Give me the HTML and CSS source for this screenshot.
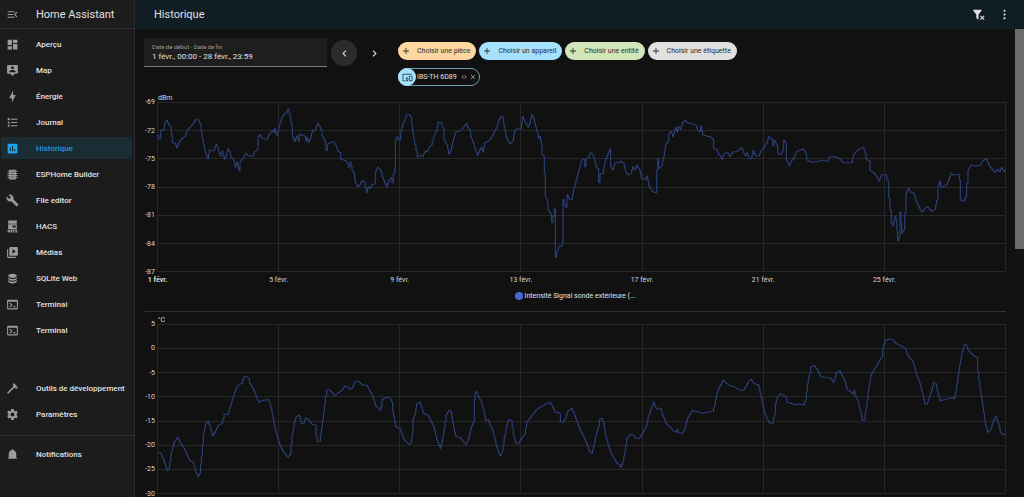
FILE: index.html
```
<!DOCTYPE html>
<html lang="fr">
<head>
  <meta charset="UTF-8">
  <meta name="viewport" content="width=device-width, initial-scale=1.0">
  <title>Historique – Home Assistant</title>
  <link rel="stylesheet" href="styles.css">
</head>
<body>
  <aside class="sidebar">
    <div class="brand">
      <button class="icon-btn" type="button" aria-label="Menu"><svg class="icon" viewBox="0 0 24 24"><path d="M21,15.61L19.59,17L14.58,12L19.59,7L21,8.39L17.44,12L21,15.61M3,6H16V8H3V6M3,13V11H13V13H3M3,18V16H16V18H3Z"/></svg></button>
      <span class="brand-name">Home Assistant</span>
    </div>
    <nav class="nav">
      <a class="item" href="#"><svg class="icon" viewBox="0 0 24 24"><path d="M13,3V9H21V3M13,21H21V11H13M3,21H11V15H3M3,13H11V3H3V13Z"/></svg>Aperçu</a>
      <a class="item" href="#"><svg class="icon" viewBox="0 0 24 24"><path d="M20,2H4A2,2 0 0,0 2,4V16A2,2 0 0,0 4,18H8L12,22L16,18H20A2,2 0 0,0 22,16V4A2,2 0 0,0 20,2M12,4.3C13.5,4.3 14.7,5.5 14.7,7C14.7,8.5 13.5,9.7 12,9.7C10.5,9.7 9.3,8.5 9.3,7C9.3,5.5 10.5,4.3 12,4.3M18,15H6V14.1C6,12.1 10,11 12,11C14,11 18,12.1 18,14.1V15Z"/></svg>Map</a>
      <a class="item" href="#"><svg class="icon" viewBox="0 0 24 24"><path d="M11 15H6L13 1V9H18L11 23V15Z"/></svg>Énergie</a>
      <a class="item" href="#"><svg class="icon" viewBox="0 0 24 24"><path d="M5,9.5L7.5,14H2.5L5,9.5M3,4H7V8H3V4M5,20A2,2 0 0,0 7,18A2,2 0 0,0 5,16A2,2 0 0,0 3,18A2,2 0 0,0 5,20M9,5V7H21V5H9M9,19H21V17H9V19M9,13H21V11H9V13Z"/></svg>Journal</a>
      <a class="item active" href="#"><svg class="icon" viewBox="0 0 24 24"><path d="M9 17H7V10H9V17M13 17H11V7H13V17M17 17H15V13H17V17M19 3H5C3.89 3 3 3.89 3 5V19C3 20.1 3.9 21 5 21H19C20.1 21 21 20.1 21 19V5C21 3.89 20.1 3 19 3Z"/></svg>Historique</a>
      <a class="item" href="#"><svg class="icon" viewBox="0 0 24 24"><path d="M6,3H18V5H21V7H18V9H21V11H18V13H21V15H18V17H21V19H18V21H6V19H3V17H6V15H3V13H6V11H3V9H6V7H3V5H6V3M8,7V8H16V7H8M8,11.500V12.500H16V11.500H8M8,16V17H16V16H8Z"/></svg>ESPHome Builder</a>
      <a class="item" href="#"><svg class="icon" viewBox="0 0 24 24"><path d="M22.7,19L13.6,9.9C14.5,7.6 14,4.9 12.1,3C10.1,1 7.1,0.6 4.7,1.7L9,6L6,9L1.6,4.7C0.4,7.1 0.9,10.1 2.9,12.1C4.8,14 7.5,14.5 9.8,13.6L18.9,22.7C19.3,23.1 19.9,23.1 20.3,22.7L22.6,20.4C23.1,20 23.1,19.3 22.7,19Z"/></svg>File editor</a>
      <a class="item" href="#"><svg class="icon" viewBox="0 0 24 24"><path d="M4,1H20V7H4V1M4,8H20V17H4V8M12,10V14H18V10H12M3,18H5V20H6V18H8V23H6V21.500H5V23H3V18M9,18H12V23H11V21.500H10V23H9V18M13,18H16V19.500H14.500V21.500H16V23H13V18M17,18H21V19.500H18.500V20H21V23H17V21.500H19.500V21H17V18Z"/></svg>HACS</a>
      <a class="item" href="#"><svg class="icon" viewBox="0 0 24 24"><path d="M4,6H2V20A2,2 0 0,0 4,22H18V20H4V6M20,2H8A2,2 0 0,0 6,4V16A2,2 0 0,0 8,18H20A2,2 0 0,0 22,16V4A2,2 0 0,0 20,2M12,14.5V5.5L18,10L12,14.5Z"/></svg>Médias</a>
      <a class="item" href="#"><svg class="icon" viewBox="0 0 24 24"><path d="M12,3C7.58,3 4,4.79 4,7C4,9.21 7.58,11 12,11C16.42,11 20,9.21 20,7C20,4.79 16.42,3 12,3M4,9V12C4,14.21 7.58,16 12,16C16.42,16 20,14.21 20,12V9C20,11.21 16.42,13 12,13C7.58,13 4,11.21 4,9M4,14V17C4,19.21 7.58,21 12,21C16.42,21 20,19.21 20,17V14C20,16.21 16.42,18 12,18C7.58,18 4,16.21 4,14Z"/></svg>SQLite Web</a>
      <a class="item" href="#"><svg class="icon" viewBox="0 0 24 24"><path d="M20,19V7H4V19H20M20,3A2,2 0 0,1 22,5V19A2,2 0 0,1 20,21H4A2,2 0 0,1 2,19V5C2,3.89 2.9,3 4,3H20M13,17V15H18V17H13M9.58,13L5.57,9H8.4L11.7,12.3C12.09,12.69 12.09,13.33 11.7,13.72L8.42,17H5.59L9.58,13Z"/></svg>Terminal</a>
      <a class="item" href="#"><svg class="icon" viewBox="0 0 24 24"><path d="M20,19V7H4V19H20M20,3A2,2 0 0,1 22,5V19A2,2 0 0,1 20,21H4A2,2 0 0,1 2,19V5C2,3.89 2.9,3 4,3H20M13,17V15H18V17H13M9.58,13L5.57,9H8.4L11.7,12.3C12.09,12.69 12.09,13.33 11.7,13.72L8.42,17H5.59L9.58,13Z"/></svg>Terminal</a>
    </nav>
    <nav class="nav nav-tools">
      <a class="item" href="#"><svg class="icon" viewBox="0 0 24 24"><path d="M2,19.63L13.43,8.2L12.72,7.5L14.14,6.07L12,3.89C13.2,2.7 15.09,2.7 16.27,3.89L19.87,7.5L18.45,8.91H21.29L22,9.62L18.45,13.21L17.74,12.5V9.62L16.27,11.04L15.56,10.33L4.13,21.76L2,19.63Z"/></svg>Outils de développement</a>
      <a class="item" href="#"><svg class="icon" viewBox="0 0 24 24"><path d="M12,15.5A3.5,3.5 0 0,1 8.5,12A3.5,3.5 0 0,1 12,8.5A3.5,3.5 0 0,1 15.5,12A3.5,3.5 0 0,1 12,15.5M19.43,12.97C19.47,12.65 19.5,12.33 19.5,12C19.5,11.67 19.47,11.34 19.43,11L21.54,9.37C21.73,9.22 21.78,8.95 21.66,8.73L19.66,5.27C19.54,5.05 19.27,4.96 19.05,5.05L16.56,6.05C16.04,5.66 15.5,5.32 14.87,5.07L14.5,2.42C14.46,2.18 14.25,2 14,2H10C9.75,2 9.54,2.18 9.5,2.42L9.13,5.07C8.5,5.32 7.96,5.66 7.44,6.05L4.95,5.05C4.73,4.96 4.46,5.05 4.34,5.27L2.34,8.73C2.21,8.95 2.27,9.22 2.46,9.37L4.57,11C4.53,11.34 4.5,11.67 4.5,12C4.5,12.33 4.53,12.65 4.57,12.97L2.46,14.63C2.27,14.78 2.21,15.05 2.34,15.27L4.34,18.73C4.46,18.95 4.73,19.03 4.95,18.95L7.44,17.94C7.96,18.34 8.5,18.68 9.13,18.93L9.5,21.58C9.54,21.82 9.75,22 10,22H14C14.25,22 14.46,21.82 14.5,21.58L14.87,18.93C15.5,18.67 16.04,18.34 16.56,17.94L19.05,18.95C19.27,19.03 19.54,18.95 19.66,18.73L21.66,15.27C21.78,15.05 21.73,14.78 21.54,14.63L19.43,12.97Z"/></svg>Paramètres</a>
    </nav>
    <nav class="nav nav-notif">
      <a class="item" href="#"><svg class="icon" viewBox="0 0 24 24"><path d="M20,19V20H4V19L5,17V11C5,7.9 7.03,5.17 10,4.29A2,2 0 0,1 14,4.29C16.97,5.17 19,7.9 19,11V17L20,19Z"/></svg>Notifications</a>
    </nav>
  </aside>

  <main class="page">
    <header class="topbar">
      <h1>Historique</h1>
      <button class="icon-btn" type="button" aria-label="Effacer les filtres"><svg class="icon" viewBox="0 0 24 24"><path d="M14.76,20.83L17.6,18L14.76,15.17L16.17,13.76L19,16.57L21.83,13.76L23.24,15.17L20.43,18L23.24,20.83L21.83,22.24L19,19.4L16.17,22.24L14.76,20.83M12,12V19.88C12.04,20.18 11.94,20.5 11.71,20.71C11.32,21.1 10.69,21.1 10.3,20.71L8.29,18.7C8.06,18.47 7.96,18.16 8,17.87V12H7.97L2.21,4.62C1.87,4.19 1.95,3.56 2.38,3.22C2.57,3.08 2.78,3 3,3H17C17.22,3 17.43,3.08 17.62,3.22C18.05,3.56 18.13,4.19 17.79,4.62L12.03,12H12Z"/></svg></button>
      <button class="icon-btn" type="button" aria-label="Plus d'options"><svg class="icon" viewBox="0 0 24 24"><circle cx="12" cy="5" r="2"/><circle cx="12" cy="12" r="2"/><circle cx="12" cy="19" r="2"/></svg></button>
    </header>

    <div class="scroller">
      <div class="content">
        <div class="filters">
          <div class="range">
            <label for="range">Date de début - Date de fin</label>
            <input id="range" type="text" value="1 févr., 00:00 - 28 févr., 23:59" readonly>
          </div>
          <button class="round on" type="button" aria-label="Précédent"><svg class="icon" viewBox="0 0 24 24"><path d="M15.41,16.58L10.83,12L15.41,7.41L14,6L8,12L14,18L15.41,16.58Z"/></svg></button>
          <button class="round" type="button" aria-label="Suivant"><svg class="icon" viewBox="0 0 24 24"><path d="M8.59,16.58L13.17,12L8.59,7.41L10,6L16,12L10,18L8.59,16.58Z"/></svg></button>
          <div class="targets">
            <div class="chips">
              <button class="chip area" type="button"><svg class="plus" viewBox="0 0 24 24"><path d="M19,13H13V19H11V13H5V11H11V5H13V11H19V13Z"/></svg>Choisir une pièce</button>
              <button class="chip device" type="button"><svg class="plus" viewBox="0 0 24 24"><path d="M19,13H13V19H11V13H5V11H11V5H13V11H19V13Z"/></svg>Choisir un appareil</button>
              <button class="chip entity" type="button"><svg class="plus" viewBox="0 0 24 24"><path d="M19,13H13V19H11V13H5V11H11V5H13V11H19V13Z"/></svg>Choisir une entité</button>
              <button class="chip tag" type="button"><svg class="plus" viewBox="0 0 24 24"><path d="M19,13H13V19H11V13H5V11H11V5H13V11H19V13Z"/></svg>Choisir une étiquette</button>
            </div>
            <div class="picked">
              <span class="picked-icon"><svg viewBox="0 0 24 24"><path d="M3 6H21V4H3C1.9 4 1 4.9 1 6V18C1 19.1 1.9 20 3 20H7V18H3V6M13 12H9V13.78C8.39 14.33 8 15.11 8 16C8 16.89 8.39 17.67 9 18.22V20H13V18.22C13.61 17.67 14 16.88 14 16S13.61 14.33 13 13.78V12M11 17.5C10.17 17.5 9.5 16.83 9.5 16S10.17 14.5 11 14.5 12.5 15.17 12.5 16 11.83 17.5 11 17.5M22 8H16C15.5 8 15 8.5 15 9V19C15 19.5 15.5 20 16 20H22C22.5 20 23 19.5 23 19V9C23 8.5 22.5 8 22 8M21 18H17V10H21V18Z"/></svg></span>
              <span class="picked-name">IBS-TH 6D89</span>
              <button type="button" aria-label="Développer"><svg viewBox="0 0 24 24"><path d="M9,5L2,12L9,19L11,17L6,12L11,7ZM15,5L22,12L15,19L13,17L18,12L13,7Z"/></svg></button>
              <button type="button" aria-label="Retirer"><svg viewBox="0 0 24 24"><path d="M21,5L19,3L12,10L5,3L3,5L10,12L3,19L5,21L12,14L19,21L21,19L14,12Z"/></svg></button>
            </div>
          </div>
        </div>

        <section class="card">
          <svg class="chart" id="signal" viewBox="0 0 862 198" role="img" aria-label="Intensité du signal"></svg>
          <div class="legend"><span class="dot"></span>Intensité Signal sonde extérieure (...</div>
        </section>
        <section class="card">
          <svg class="chart" id="temperature" viewBox="0 0 862 198" role="img" aria-label="Température"></svg>
        </section>
      </div>
      <div class="scrollbar"><div class="thumb"></div></div>
    </div>
  </main>
  <script src="script.js"></script>
</body>
</html>
```
FILE: styles.css
```
*{box-sizing:border-box;}
body{margin:0;height:100vh;display:flex;overflow:hidden;background:#111;color:#e1e1e1;font-family:Roboto,"Liberation Sans",sans-serif;font-size:8px;}
button{font:inherit;color:inherit;background:none;border:0;padding:0;display:flex;align-items:center;justify-content:center;cursor:pointer;}
svg{display:block;fill:currentColor;}
.icon{width:13px;height:13px;flex:none;fill-rule:evenodd;}

.sidebar{width:135px;flex:none;display:flex;flex-direction:column;background:#1c1c1c;border-right:1px solid #2c2c2c;}
.brand{height:29px;flex:none;display:flex;align-items:center;gap:17px;padding-left:6px;border-bottom:1px solid #2e2e2e;color:#9b9b9b;}
.brand-name{font-size:11px;color:#e1e1e1;}
.nav{display:flex;flex-direction:column;gap:4px;padding:4px 2px 0 1px;}
.nav-tools{margin-top:auto;padding-bottom:10px;}
.nav-notif{border-top:1px solid #2e2e2e;padding-top:7px;padding-bottom:32px;}
.item{height:22px;display:flex;align-items:center;gap:17px;padding-left:5px;border-radius:2px;color:#e1e1e1;font-weight:500;text-decoration:none;white-space:nowrap;}
.item .icon{color:#9b9b9b;}
.item.active{background:#1a2d35;color:#1f9bdc;}
.item.active .icon{color:#18a5f0;}

.page{flex:1;min-width:0;display:flex;flex-direction:column;}
.topbar{height:29px;flex:none;display:flex;align-items:center;gap:13px;padding:0 13px 0 19px;background:#101e24;}
.topbar h1{flex:1;margin:0;font-size:11px;font-weight:400;}
.scroller{flex:1;min-height:0;display:flex;overflow:hidden;}
.content{flex:1;min-width:0;padding:9px 9px 0;}

.filters{display:flex;height:52px;}
.range{width:183px;height:29px;padding:5px 8px 0;background:#1e1e1e;border-bottom:1px solid #7a7a7a;}
.range label{display:block;font-size:6px;line-height:8px;color:#9b9b9b;}
.range input{display:block;width:100%;height:11px;padding:0;border:0;outline:0;background:none;color:#e1e1e1;font:inherit;}
.round{width:26px;height:26px;margin:2px 0 0 4px;border-radius:50%;}
.round.on{background:#2b2b2b;}
.targets{padding:4px 0 0 11px;}
.chips{display:flex;gap:3px;}
.chip{height:18px;padding:0 6px 0 3px;gap:6px;border-radius:9px;font-size:7px;color:#2c2c2c;white-space:nowrap;}
.plus{width:10px;height:10px;}
.area{background:#fed6a0;}
.device{background:#a5e1fc;}
.entity{background:#d2e7b9;}
.tag{background:#e0e0e0;}
.picked{display:inline-flex;align-items:center;height:18px;margin-top:8px;padding-right:1px;border:1px solid #6f9cae;border-radius:9px;font-size:7px;}
.picked-icon{width:18px;height:18px;margin-left:-1px;display:flex;align-items:center;justify-content:center;border-radius:50%;background:#a5e1fc;color:#35505b;}
.picked-icon svg{width:11px;height:11px;}
.picked-name{padding:0 3px 0 1px;}
.picked button{width:9px;color:#9b9b9b;}
.picked button svg{width:6px;height:6px;}

.card + .card{margin-top:8px;border-top:1px solid #333;}
.chart{width:100%;height:auto;font-size:7px;fill:#d6d6d6;}
.grid{stroke:#272727;fill:none;shape-rendering:crispEdges;}
.line{stroke:#2f4685;fill:none;stroke-linejoin:round;}
.tick-y{text-anchor:end;}
.tick-x{text-anchor:middle;}
.tick-x.first{font-weight:700;}
.legend{display:flex;align-items:center;justify-content:center;gap:2px;height:15px;font-size:7px;}
.dot{width:8px;height:8px;border-radius:50%;background:#4269d0;}

.scrollbar{width:9px;flex:none;background:#131313;}
.thumb{height:47%;background:#6c6c6c;}
```
FILE: script.js
```
const NS = 'http://www.w3.org/2000/svg';
const DAYS = ['1 févr.', '5 févr.', '9 févr.', '13 févr.', '17 févr.', '21 févr.', '25 févr.', ''];

// x,y samples, three units per chart pixel
const signal = `53,136 56,146 60,146 62,120 69,120 73,100 80,90 85,103 90,108 97,158 105,160 110,174 116,158 125,145 135,138 140,122 150,110 160,98 167,88 175,90 180,102 186,145 193,180 198,195 203,206 208,180 220,183 228,163 234,178 240,198 246,184 252,208 258,195 263,176 268,184 273,203 280,210 285,232 290,216 296,242 300,215 310,202 316,190 322,196 337,200 342,186 350,180 354,140 360,134 365,145 380,148 388,130 396,122 400,128 403,116 407,132 411,138 416,110 424,85 432,70 438,70 443,57 447,68 453,100 457,140 463,154 470,138 474,154 478,132 486,137 494,138 497,153 500,142 505,157 512,140 517,120 523,124 532,100 537,104 542,118 546,138 553,150 558,182 562,162 570,158 578,154 586,164 594,185 600,187 602,208 615,212 622,222 626,232 630,216 636,240 641,250 646,280 653,290 660,283 665,272 672,276 679,308 684,290 690,296 695,283 703,282 706,245 712,231 720,240 727,262 734,280 740,290 746,270 753,263 756,278 760,250 764,235 766,150 770,140 778,150 782,125 788,100 795,86 800,73 808,74 813,84 818,130 824,165 828,182 832,202 838,196 846,200 850,192 855,183 860,186 865,175 873,165 880,142 888,125 894,97
903,98 908,115 912,150 920,165 926,192 932,180 938,155 946,126 954,124 962,120 970,112 978,100 982,112 988,120 992,140 1000,160 1005,180 1012,196 1018,180 1023,172 1028,187 1033,158 1042,155 1050,148 1060,130 1070,110 1076,90 1082,78 1087,82 1092,110 1098,140 1104,155 1110,162 1118,150 1123,122 1132,116 1142,116 1147,80 1154,95 1163,112 1168,100 1175,74 1181,86 1186,110 1192,130 1195,145 1199,138 1204,165 1206,194 1211,198 1213,250 1216,320 1222,335 1224,360 1232,372 1235,398 1239,378 1243,356 1246,502 1250,485 1256,470 1263,468 1267,455 1269,328 1273,345 1277,352 1281,314 1287,328 1294,330 1300,300 1308,270 1316,240 1324,210 1330,208 1334,230 1338,205 1345,203 1350,188 1356,192 1362,205 1368,232 1374,236 1376,278 1380,252 1388,250 1394,215 1404,188 1410,176 1412,232 1418,240 1424,218 1434,218 1442,213 1450,220 1456,245 1464,255 1472,250 1478,230 1484,240 1490,226 1498,240 1504,265 1514,268 1520,258 1526,288 1536,305 1548,308 1550,240 1553,205 1556,236 1564,228 1570,200 1576,165 1582,155 1586,130 1592,124 1598,140 1606,112 1610,126 1616,110 1620,118 1627,98 1634,91 1642,98 1650,100 1665,104 1672,120 1678,125 1682,108 1688,135 1698,138 1713,142 1719,150 1721,176 1730,180 1736,195
1740,196 1745,207 1752,190 1762,188 1768,200 1778,186 1790,184 1803,173 1810,188 1815,198 1820,188 1826,206 1833,206 1839,182 1846,198 1856,198 1862,182 1870,175 1878,160 1885,140 1895,148 1898,168 1902,150 1910,165 1913,190 1923,194 1928,180 1931,150 1937,160 1939,210 1947,228 1952,215 1960,205 1968,185 1980,180 1989,176 1996,190 2000,210 2010,216 2030,216 2040,212 2062,213 2068,200 2085,200 2100,208 2108,218 2135,218 2140,195 2148,184 2158,177 2169,172 2175,190 2178,208 2186,212 2190,242 2200,248 2210,260 2216,274 2224,254 2236,254 2240,268 2244,275 2246,325 2250,360 2254,400 2258,408 2264,380 2268,390 2273,452 2277,440 2280,366 2285,430 2290,420 2294,370 2298,310 2304,295 2310,306 2320,308 2326,330 2334,345 2340,360 2346,366 2352,356 2362,350 2374,364 2384,358 2390,330 2394,285 2398,274 2402,292 2410,288 2420,284 2425,268 2432,250 2440,255 2455,253 2458,270 2461,330 2470,334 2476,320 2480,280 2484,240 2492,225 2505,228 2520,225 2528,212 2538,206 2546,225 2554,236 2564,248 2572,238 2578,245 2584,232 2590,244 2598,241`;

const temperature = `53,457 62,460 70,480 80,512 86,505 92,465 100,430 112,411 120,428 132,446 148,482 158,486 165,512 173,530 179,520 184,470 190,400 196,370 203,363 210,385 217,407 224,397 235,375 245,370 252,343 262,344 270,318 280,285 290,260 298,253 306,250 311,230 320,230 325,235 328,250 338,265 348,290 356,307 366,301 385,299 390,315 396,340 402,375 410,405 418,433 430,458 443,472 450,462 456,400 463,365 468,350 475,345 481,355 483,370 490,370 496,354 504,358 514,372 525,375 528,410 532,425 538,424 544,385 550,340 556,290 560,270 568,270 575,278 583,286 592,280 605,270 614,257 622,262 628,268 636,264 644,245 655,244 665,255 680,256 688,272 698,290 706,316 718,330 722,320 726,298 738,292 748,293 754,305 758,335 766,378 770,384 778,384 784,400 792,420 806,433 812,428 817,400 819,355 825,340 830,310 838,306 844,322 849,340 862,346 868,355 880,380 890,420
900,445 906,420 912,385 918,345 926,331 932,335 938,370 946,408 962,415 970,426 978,433 986,410 992,385 1000,365 1003,300 1005,278 1009,274 1014,290 1022,302 1030,330 1036,360 1044,360 1050,375 1060,400 1068,435 1076,462 1080,468 1086,455 1092,415 1100,375 1106,358 1113,362 1120,405 1126,430 1134,430 1142,418 1153,402 1160,365 1172,350 1188,330 1208,316 1228,307 1236,318 1244,336 1260,340 1261,366 1268,367 1276,355 1282,335 1294,325 1300,338 1310,365 1320,392 1330,410 1340,432 1348,455 1355,460 1360,440 1366,410 1374,380 1378,358 1384,355 1390,370 1396,405 1404,435 1412,460 1428,488 1438,495 1441,502 1448,485 1454,455 1460,415 1470,403 1480,405 1484,415 1497,415 1506,400 1518,378 1524,350 1532,328 1540,307 1546,322 1552,328 1562,325 1567,345 1578,372 1588,380 1598,392 1608,396 1611,388 1614,398 1627,400 1634,385 1642,355 1656,331 1670,335 1685,340 1700,337 1718,334 1723,315 1730,280 1738,260 1748,241 1758,250
1768,257 1782,260 1798,270 1810,271 1818,258 1824,245 1832,238 1840,250 1854,255 1860,280 1866,308 1872,335 1880,355 1888,369 1897,370 1902,345 1906,310 1912,290 1920,281 1936,290 1940,307 1965,314 1980,312 1990,316 1996,300 2002,250 2008,220 2012,200 2022,197 2030,208 2042,230 2072,235 2078,247 2082,242 2088,218 2099,212 2104,225 2114,245 2120,268 2138,282 2141,272 2145,288 2152,300 2160,330 2166,360 2172,360 2178,320 2184,275 2192,225 2202,208 2225,170 2228,140 2235,122 2245,117 2258,120 2266,130 2295,145 2303,168 2318,185 2328,220 2340,255 2348,285 2354,313 2360,313 2368,290 2374,270 2380,247 2386,250 2392,275 2400,302 2420,297 2435,293 2442,296 2448,270 2456,210 2464,165 2472,134 2478,135 2484,150 2496,164 2509,172 2513,215 2520,270 2528,320 2536,375 2542,397 2550,390 2560,360 2567,349 2574,370 2580,395 2586,403 2598,403`;

function add(parent, tag, attrs, text) {
  const el = document.createElementNS(NS, tag);
  for (const k in attrs) el.setAttribute(k, attrs[k]);
  if (text) el.textContent = text;
  parent.appendChild(el);
}

// the sensor reports in small steps, so hold each value until the next one
function stepPath(data, offset) {
  const pts = data.trim().split(/\s+/).map(p => p.split(',').map(Number));
  let d = '';
  for (let i = 0; i < pts.length - 1; i++) {
    const [x0, y0] = pts[i], [x1, y1] = pts[i + 1];
    const n = Math.max(1, Math.round((x1 - x0) / 3));
    for (let j = 0; j < n; j++) {
      const x = (x0 + (x1 - x0) * j / n) / 3 - 4;
      const y = (y0 + (y1 - y0) * j / n) / 3 - offset;
      d += d ? `H${x.toFixed(1)}V${y.toFixed(1)}` : `M${x.toFixed(1)},${y.toFixed(1)}`;
    }
  }
  return d + 'H862';
}

function drawChart(id, o) {
  const svg = document.getElementById(id);
  const bottom = o.top + o.step * (o.ticks.length - 1);
  o.ticks.forEach((t, i) => {
    const y = o.top + o.step * i;
    add(svg, 'path', {class: 'grid', d: `M13.5,${y}H862`});
    add(svg, 'text', {class: 'tick-y', x: 11, y: y + 2}, t);
  });
  for (let i = 0; i < 8; i++) {
    const x = 13.5 + i * 121.14;
    add(svg, 'path', {class: 'grid', d: `M${x},${o.top}V${bottom}`});
    if (o.days && o.days[i]) {
      add(svg, 'text', {class: i ? 'tick-x' : 'tick-x first', x: x, y: bottom + 10}, o.days[i]);
    }
  }
  add(svg, 'text', {x: 14, y: o.top - 2}, o.unit);
  add(svg, 'path', {class: 'line', d: stepPath(o.data, o.offset)});
}

drawChart('signal', {unit: 'dBm', top: 12.4, step: 28.25, offset: 0, data: signal, days: DAYS,
  ticks: ['-69', '-72', '-75', '-78', '-81', '-84', '-87']});
drawChart('temperature', {unit: '°C', top: 12.3, step: 24.18, offset: 12, data: temperature,
  ticks: ['5', '0', '-5', '-10', '-15', '-20', '-25', '-30']});
```
